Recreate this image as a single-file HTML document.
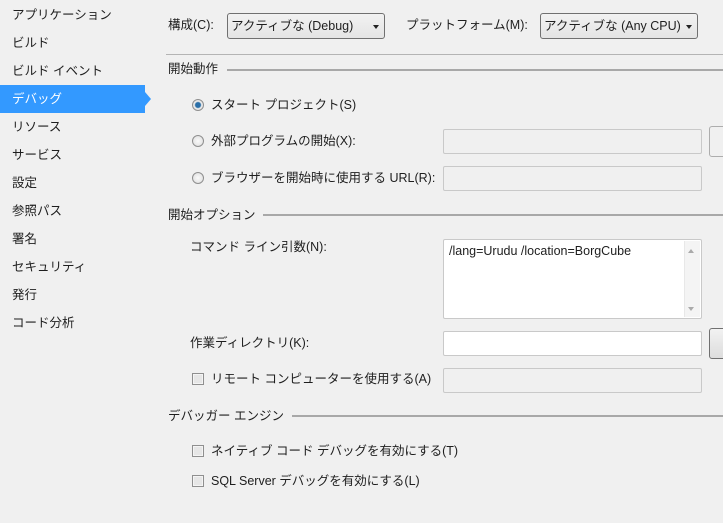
<!DOCTYPE html>
<html><head><meta charset="utf-8"><style>
*{margin:0;padding:0;box-sizing:border-box}
body{width:723px;height:523px;background:#f0f0f0;position:relative;overflow:hidden;font-family:"Liberation Sans","Noto Sans CJK JP",sans-serif;font-size:12.5px;color:#1e1e1e}
.a{position:absolute;white-space:nowrap;line-height:16px}
.side{left:12px}
.hl{position:absolute;left:0;top:85px;width:145px;height:28px;background:#3399ff}
.hl:after{content:"";position:absolute;left:145px;top:7px;border-left:6px solid #3399ff;border-top:7px solid transparent;border-bottom:7px solid transparent}
.combo{position:absolute;height:26px;border:1px solid #707070;border-radius:3px;background:linear-gradient(#f2f2f2,#e4e4e4);padding:4px 0 0 3px;line-height:16px}
.combo:after{content:"";position:absolute;right:5px;top:11px;border-top:4px solid #222;border-left:3.5px solid transparent;border-right:3.5px solid transparent}
.box{position:absolute;border:1px solid #c9c9c9;border-radius:2px;background:#f0f0f0}
.w{background:#fff}
.line{position:absolute;height:2px;background:#a8a8a8}
.rad{position:absolute;width:12px;height:12px;border-radius:50%;border:1px solid #8f8f8f;background:radial-gradient(#fafafa,#dcdcdc)}
.chk{position:absolute;width:12px;height:12px;border:1px solid #8f8f8f;background:#e6e6e6;box-shadow:inset 0 0 0 1px #f4f4f4}
.btn{position:absolute;border:1px solid #707070;border-radius:3px;background:linear-gradient(#f2f2f2,#ddd)}
</style></head><body>
<div class="hl"></div>
<div class="a side" style="top:7px">アプリケーション</div>
<div class="a side" style="top:35px">ビルド</div>
<div class="a side" style="top:63px">ビルド イベント</div>
<div class="a side" style="top:91px;color:#fff">デバッグ</div>
<div class="a side" style="top:119px">リソース</div>
<div class="a side" style="top:147px">サービス</div>
<div class="a side" style="top:175px">設定</div>
<div class="a side" style="top:203px">参照パス</div>
<div class="a side" style="top:231px">署名</div>
<div class="a side" style="top:259px">セキュリティ</div>
<div class="a side" style="top:287px">発行</div>
<div class="a side" style="top:315px">コード分析</div>

<div class="a" style="left:168px;top:17px">構成(C):</div>
<div class="combo" style="left:227px;top:13px;width:158px">アクティブな (Debug)</div>
<div class="a" style="left:406px;top:17px">プラットフォーム(M):</div>
<div class="combo" style="left:540px;top:13px;width:158px">アクティブな (Any CPU)</div>
<div class="line" style="left:166px;top:54px;width:557px;height:1px;background:#b4b4b4"></div>

<div class="a" style="left:168px;top:61px">開始動作</div>
<div class="line" style="left:227px;top:69px;width:496px"></div>
<div class="rad" style="left:192px;top:99px;background:radial-gradient(#2a6fa8 0,#2a6fa8 2.5px,#e8e8e8 3.5px)"></div>
<div class="a" style="left:211px;top:97px">スタート プロジェクト(S)</div>
<div class="rad" style="left:192px;top:135px"></div>
<div class="a" style="left:211px;top:133px">外部プログラムの開始(X):</div>
<div class="box" style="left:443px;top:129px;width:259px;height:25px"></div>
<div class="box" style="left:709px;top:126px;width:20px;height:31px;border-color:#adadad;border-radius:3px"></div>
<div class="rad" style="left:192px;top:172px"></div>
<div class="a" style="left:211px;top:170px">ブラウザーを開始時に使用する URL(R):</div>
<div class="box" style="left:443px;top:166px;width:259px;height:25px"></div>

<div class="a" style="left:168px;top:207px">開始オプション</div>
<div class="line" style="left:263px;top:214px;width:460px"></div>
<div class="a" style="left:190px;top:239px">コマンド ライン引数(N):</div>
<div class="box w" style="left:443px;top:239px;width:259px;height:80px"></div>
<div class="a" style="left:449px;top:243px">/lang=Urudu /location=BorgCube</div>
<div style="position:absolute;left:684px;top:241px;width:16px;height:76px;background:#f4f4f4;border-left:1px solid #e8e8e8"></div>
<div style="position:absolute;left:688px;top:249px;border-bottom:4px solid #aaa;border-left:3.5px solid transparent;border-right:3.5px solid transparent"></div>
<div style="position:absolute;left:688px;top:307px;border-top:4px solid #aaa;border-left:3.5px solid transparent;border-right:3.5px solid transparent"></div>
<div class="a" style="left:190px;top:335px">作業ディレクトリ(K):</div>
<div class="box w" style="left:443px;top:331px;width:259px;height:25px"></div>
<div class="btn" style="left:709px;top:328px;width:20px;height:31px"></div>
<div class="chk" style="left:192px;top:373px"></div>
<div class="a" style="left:211px;top:371px">リモート コンピューターを使用する(A)</div>
<div class="box" style="left:443px;top:368px;width:259px;height:25px"></div>

<div class="a" style="left:168px;top:408px">デバッガー エンジン</div>
<div class="line" style="left:292px;top:415px;width:431px"></div>
<div class="chk" style="left:192px;top:445px"></div>
<div class="a" style="left:211px;top:443px">ネイティブ コード デバッグを有効にする(T)</div>
<div class="chk" style="left:192px;top:475px"></div>
<div class="a" style="left:211px;top:473px">SQL Server デバッグを有効にする(L)</div>
</body></html>
